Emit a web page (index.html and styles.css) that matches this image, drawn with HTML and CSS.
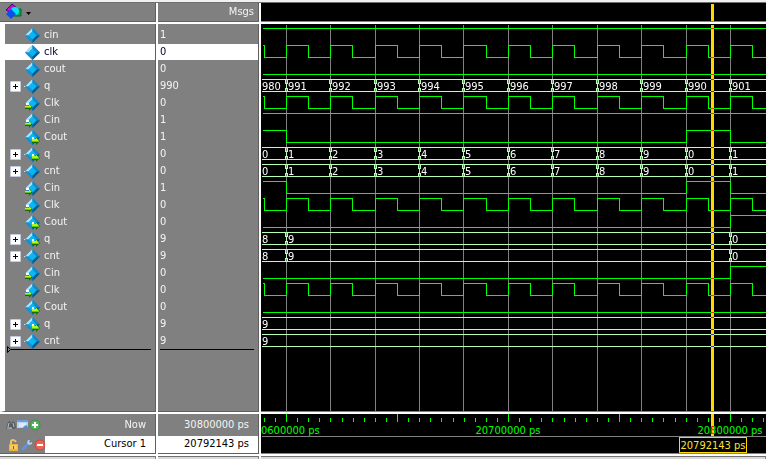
FILE: index.html
```html
<!DOCTYPE html>
<html lang="en">
<head>
  <meta charset="UTF-8" />
  <meta name="viewport" content="width=device-width, initial-scale=1" />
  <title>Wave</title>
  <link rel="stylesheet" href="styles.css">
</head>
<body>
  <!-- Shared icons -->
  <svg class="defs" aria-hidden="true">
    <symbol id="diamond" viewBox="0 0 16 16">
      <path d="M8.500 1L16 8.500L8.500 16L1 8.500Z" fill="#0e84c4" />
      <path d="M8.500 1L1 8.500H4.500L8.500 4.500Z" fill="#a6e4fa" />
      <path d="M8.500 1V4.500L12.500 8.500H16Z" fill="#1488cc" />
      <path d="M1 8.500H4.500L8.500 12.500V16Z" fill="#1690d4" />
      <path d="M16 8.500H12.500L8.500 12.500V16Z" fill="#075a86" />
      <path d="M8.500 4.500L12.500 8.500L8.500 12.500L4.500 8.500Z" fill="#08b8f4" />
    </symbol>
    <symbol id="arrow-in" viewBox="0 0 16 16">
      <path d="M2 8H5V10H2Z" fill="#fff" />
      <path d="M1 11H5V8.500L8.500 12L5 16V14H1Z" fill="#176b08" />
      <path d="M1 11H5V9L8 12H1Z" fill="#b4f51c" />
      <path d="M1 12H7V13H1Z" fill="#5ccc10" />
    </symbol>
    <symbol id="arrow-out" viewBox="0 0 16 16">
      <path d="M8 8H10V10H8Z" fill="#fff" />
      <path d="M8 10H12V8L16 12L12 16V14H8Z" fill="#176b08" />
      <path d="M8 10H12V8.500L15 12H8Z" fill="#b4f51c" />
      <path d="M8 12H15V13H8Z" fill="#5ccc10" />
    </symbol>
  </svg>

  <main class="wave-window">
    <div class="pane head">
      <button class="objects" aria-label="Object filter">
        <svg width="28" height="16" viewBox="0 0 28 16">
          <path d="M1 6L7 0L13 5L12 7L5 8Z" fill="#b414d4" stroke="#500070" />
          <path d="M10 5H16V12H8Z" fill="#16a04c" stroke="#08602c" />
          <circle cx="10" cy="7" r="4" fill="#00e4f8" />
          <path d="M6 5L11 10L6 15L1 10Z" fill="#0850e8" />
          <path d="M21 8H26L23.500 11Z" fill="#000" />
        </svg>
      </button>
    </div>
    <div class="pane head msgs">Msgs</div>
    <div class="pane black"><svg class="fill"><rect class="cursor" x="450" y="1" width="3" height="17" /></svg></div>

    <div class="pane names">
      <ul id="names"></ul>
      <div class="insert">
        <svg width="4" height="7" viewBox="0 0 4 7"><path d="M.5 .5L3.500 3.500L.5 6.500Z" fill="none" stroke="#000" /></svg>
        <span></span>
      </div>
    </div>
    <div class="pane values">
      <ul id="values"></ul>
      <div class="insert"><span></span></div>
    </div>
    <div class="pane black"><svg class="fill" id="waves"></svg></div>

    <div class="pane foot">
      <div class="now">
        <div class="tools">
          <button aria-label="Snap to edge">
            <svg width="12" height="12" viewBox="0 0 12 12">
              <path d="M1 10L3 3L5 2L6 5L8 2L10 4L11 9L8 10L6 8Z" fill="#555c62" />
              <path d="M2 9H7M4 4L3 8M8 4L9 8" stroke="#b8c4cc" fill="none" />
            </svg>
          </button>
          <button aria-label="Edit timeline">
            <svg width="12" height="12" viewBox="0 0 12 12">
              <path d="M0 1H11V9H0Z" fill="#b8d4f4" />
              <path d="M0 1H11V3H0Z" fill="#6ca0dc" />
              <path d="M2 5H9M2 7H7" stroke="#fff" />
              <path d="M6 8L10 6L11 9L8 12Z" fill="#6088c0" />
            </svg>
          </button>
          <button aria-label="Add cursor">
            <svg width="12" height="12" viewBox="0 0 12 12">
              <circle cx="6" cy="6" r="5" fill="#54b45c" stroke="#3b9444" />
              <path d="M6 3V9M3 6H9" stroke="#fff" stroke-width="2" />
            </svg>
          </button>
        </div>
        <span>Now</span>
      </div>
      <div class="cur">
        <div class="tools">
          <button aria-label="Lock cursor">
            <svg width="12" height="12" viewBox="0 0 12 12">
              <path d="M3 6V3Q3 1 5 1T8 3" fill="none" stroke="#e8c46c" stroke-width="2" />
              <path d="M1 5H10V12H1Z" fill="#f0b43c" />
              <path d="M2 7H9M2 9H9" stroke="#fce08c" />
              <path d="M5 7H6V10H5Z" fill="#8c6010" />
            </svg>
          </button>
          <button aria-label="Cursor properties">
            <svg width="12" height="12" viewBox="0 0 12 12">
              <path d="M2 10L8 4" stroke="#5c94e0" stroke-width="3" stroke-linecap="round" />
              <path d="M7 1L6 4L8 6L11 5L11 3L9 4L8 3L9 1Z" fill="#b4d0f4" />
            </svg>
          </button>
          <button aria-label="Delete cursor">
            <svg width="12" height="12" viewBox="0 0 12 12">
              <circle cx="6" cy="6" r="5" fill="#ec6454" stroke="#d04434" />
              <path d="M3 6H9" stroke="#fff" stroke-width="2" />
            </svg>
          </button>
        </div>
        <span>Cursor 1</span>
      </div>
    </div>
    <div class="pane foot">
      <div class="now"><span>30800000 ps</span></div>
      <div class="cur"><span>20792143 ps</span></div>
    </div>
    <div class="pane black"><svg class="fill" id="timeline"></svg></div>

    <div class="scroll"></div>
    <div class="scroll"></div>
    <div class="scroll"></div>
  </main>

  <script>
    // x of every clock period start, and of the falling edges
    const rise = [25, 69, 114, 158, 202, 247, 291, 336, 380, 425, 469];
    const fall = [3, 47, 91, 136, 180, 225, 269, 313, 358, 402, 447, 491];
    const ROW = 17;
    const END = 4000;
    const CURSOR = 450;

    const clock = { high: true, edges: [...rise, ...fall].sort((a, b) => a - b) };
    const low = { high: false, edges: [] };
    const high = { high: true, edges: [] };
    const digits = { bus: ['0', '1', '2', '3', '4', '5', '6', '7', '8', '9', '0', '1'], edges: rise };
    const tens = { bus: ['8', '9', '0'], edges: [25, 469] };
    const nines = { bus: ['9'], edges: [] };

    const signals = [
      { name: 'cin', value: 1, wave: high },
      { name: 'clk', value: 0, wave: clock, selected: true },
      { name: 'cout', value: 0, wave: low },
      { name: 'q', value: 990, wave: { bus: ['980', '991', '992', '993', '994', '995', '996', '997', '998', '999', '990', '901'], edges: rise } },
      { name: 'Clk', value: 0, port: 'in', wave: clock },
      { name: 'Cin', value: 1, port: 'in', wave: high },
      { name: 'Cout', value: 1, port: 'out', wave: { high: true, edges: [25, 425, 469] } },
      { name: 'q', value: 0, port: 'out', wave: digits },
      { name: 'cnt', value: 0, wave: digits },
      { name: 'Cin', value: 1, port: 'in', wave: { high: true, edges: [25, 425, 469] } },
      { name: 'Clk', value: 0, port: 'in', wave: clock },
      { name: 'Cout', value: 0, port: 'out', wave: { high: false, edges: [469] } },
      { name: 'q', value: 9, port: 'out', wave: tens },
      { name: 'cnt', value: 9, wave: tens },
      { name: 'Cin', value: 0, port: 'in', wave: { high: false, edges: [469] } },
      { name: 'Clk', value: 0, port: 'in', wave: clock },
      { name: 'Cout', value: 0, port: 'out', wave: low },
      { name: 'q', value: 9, port: 'out', wave: nines },
      { name: 'cnt', value: 9, wave: nines }
    ];

    function nameRow(s) {
      const expand = s.wave.bus ? `<button class="expand" aria-label="Expand ${s.name}"></button>` : '';
      const link = s.wave.bus ? '<path d="M0 8.500H3" stroke="#ddd" />' : '';
      const port = s.port ? `<use href="#arrow-${s.port}" />` : '';
      return `<li class="${s.selected ? 'selected' : ''}"><span class="tree">${expand}</span>
        <svg width="16" height="16">${link}<use href="#diamond" />${port}</svg>${s.name}</li>`;
    }

    function drawBit(w, top) {
      let level = w.high;
      let d = `M1 ${top + (level ? 2 : 14)}`;
      for (const x of w.edges) {
        level = !level;
        d += `H${x}V${top + (level ? 2 : 14)}`;
      }
      return `<path class="bit" d="${d}H${END}" />`;
    }

    function drawBus(w, top) {
      let out = `<path class="bus" d="M0 ${top + 2}H${END}M0 ${top + 14}H${END}" />`;
      for (const x of w.edges) {
        out += `<path class="cross" d="M${x - 1} ${top + 2}v4M${x + 1} ${top + 2}v4M${x} ${top + 5}v6M${x - 1} ${top + 10}v4M${x + 1} ${top + 10}v4" />`;
      }
      w.bus.forEach((text, i) => {
        const x = i ? w.edges[i - 1] + 2 : 1;
        out += `<text x="${x}" y="${top + 13}">${text}</text>`;
      });
      return out;
    }

    document.getElementById('names').innerHTML = signals.map(nameRow).join('');
    document.getElementById('values').innerHTML = signals
      .map(s => `<li class="${s.selected ? 'selected' : ''}">${s.value}</li>`).join('');

    const grid = rise.map(x => `<path class="grid" d="M${x} 0V${END}" />`).join('');
    const rows = signals.map((s, i) => {
      const top = 2 + i * ROW;
      return s.wave.bus ? drawBus(s.wave, top) : drawBit(s.wave, top);
    }).join('');
    document.getElementById('waves').innerHTML =
      `${grid}${rows}<rect class="cursor" x="${CURSOR}" y="1" width="3" height="100%" />`;

    // Timeline: a long tick every 10 minor ones
    let ticks = '';
    for (let i = -2; i < 300; i++) {
      const x = Math.round(25 + i * 11.1);
      ticks += `M${x} ${i % 10 === 0 ? -1 : 3}V7`;
    }
    document.getElementById('timeline').innerHTML =
      `<path class="bit" d="${ticks}" />
       <g class="times">
         <text class="first" x="0" y="20">0600000 ps</text>
         <text x="247" y="20">20700000 ps</text>
         <text x="469" y="20">20800000 ps</text>
       </g>
       <path class="grid" d="M0 22H${END}" />
       <rect class="cursor" x="${CURSOR}" y="0" width="3" height="22" />
       <rect class="tag" x="418" y="23" width="67" height="15" />
       <text class="tag-text" x="452" y="35">20792143 ps</text>`;
  </script>
</body>
</html>
```
FILE: styles.css
```css
* {
  box-sizing: border-box;
}

body {
  margin: 0;
  background: #fff;
  font-family: "DejaVu Sans Condensed", Tahoma, sans-serif;
  font-size: 11px;
  line-height: 16px;
  color: #f4f4f4;
}

ul {
  list-style: none;
  margin: 0;
  padding: 2px 0 0;
}

button {
  display: block;
  padding: 0;
  border: none;
  background: none;
}

svg {
  display: block;
  flex: none;
}

.defs {
  position: absolute;
  width: 0;
  height: 0;
}

.wave-window {
  display: grid;
  grid-template-columns: 156px 101px 1fr;
  grid-template-rows: 19px 1fr 40px 3px;
  gap: 2px;
  height: 100vh;
  padding-top: 2px;
  border-top: 1px solid #f0f0f0;
  box-shadow: inset 0 1px #f0f0f0, inset 0 2px #707070;
  overflow: hidden;
}

.pane {
  min-width: 0;
  min-height: 0;
  overflow: hidden;
  background: #808080;
  border-right: 1px solid #606060;
  border-bottom: 1px solid #606060;
}

.black {
  background: #000;
  border-right: none;
  border-bottom-color: #808080;
}

.objects {
  margin: 1px 0 0 5px;
}

.msgs {
  padding: 1px 4px 0 0;
  text-align: right;
}

/* Signal list */
.names {
  border-left: 5px solid #fff;
}

li {
  display: flex;
  align-items: center;
  height: 16px;
  margin-top: 1px;
}

.names li {
  padding-left: 5px;
}

.names li svg {
  margin-right: 4px;
}

.values li {
  padding-left: 2px;
}

.selected {
  background: #fff;
  color: #000030;
}

.tree {
  width: 14px;
}

.expand {
  width: 11px;
  height: 11px;
  margin-top: 1px;
  border: 1px solid #c4cce0;
  border-radius: 1px;
  background:
    linear-gradient(#000, #000) center / 5px 1px no-repeat,
    linear-gradient(#000, #000) center / 1px 5px no-repeat,
    #fff;
}

.insert {
  display: flex;
  align-items: center;
  height: 7px;
  margin: -3px 4px 0 2px;
}

.insert span {
  flex: 1;
  height: 1px;
  background: #000;
}

/* Cursor panel */
.now,
.cur {
  display: flex;
  align-items: center;
  justify-content: space-between;
}

.now {
  height: 22px;
  padding-left: 5px;
}

.cur {
  height: 17px;
  color: #000;
}

.now span,
.cur span {
  flex: 1;
  padding-right: 9px;
  text-align: right;
}

.cur span {
  height: 17px;
  background: #fff;
}

.tools {
  display: flex;
}

.cur .tools {
  gap: 1px;
  width: 45px;
  padding-left: 8px;
}

/* Drawings */
.fill {
  width: 100%;
  height: 100%;
}

/* centre the 1px strokes on whole pixels */
.grid,
.bit,
.bus,
.cross,
.tag {
  fill: none;
  shape-rendering: crispEdges;
  transform: translate(.5px, .5px);
}

.grid {
  stroke: #808080;
}

.bit {
  stroke: #0f0;
}

.bus,
.cross {
  stroke: #b4ffb4;
}

text {
  fill: #fff;
}

.times text {
  fill: #0f0;
  text-anchor: middle;
}

.times .first {
  text-anchor: start;
}

.cursor {
  fill: #ffd800;
  mix-blend-mode: difference;
}

.tag {
  fill: #000;
  stroke: #ffd800;
}

.tag-text {
  fill: #ffe030;
  text-anchor: middle;
}

.scroll {
  background: #d8d8d8;
  border-top: 1px solid #707070;
  border-right: 1px solid #808080;
}
```
